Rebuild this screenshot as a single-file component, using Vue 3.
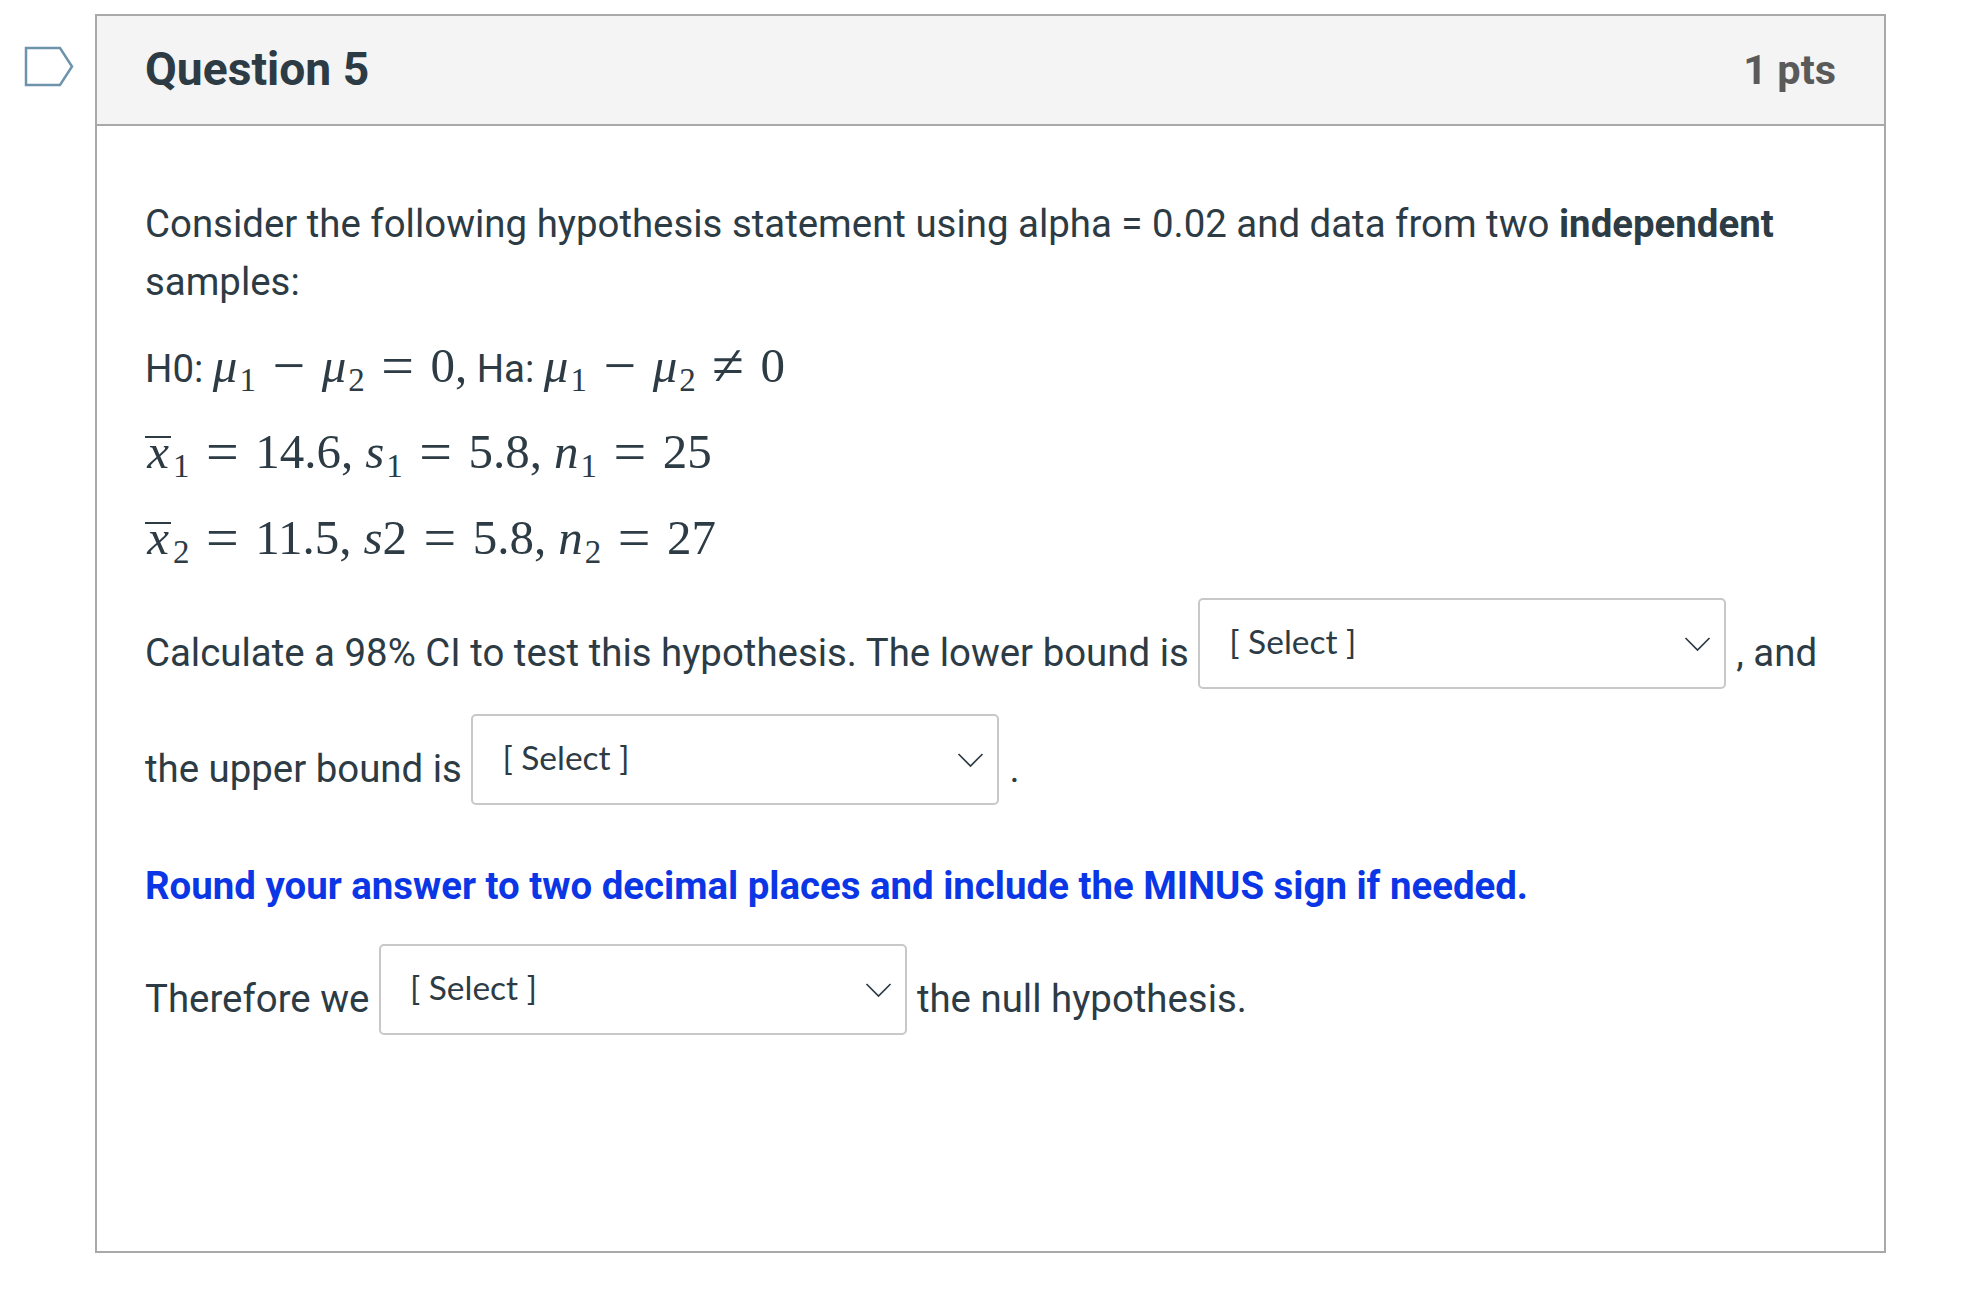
<script setup>
const selectLabel = '[ Select ]'
</script>

<template>
  <main class="page">
    <svg class="flag" width="50" height="44" viewBox="0 0 50 44" aria-hidden="true">
      <path d="M2 3H36L48 21.5L36 40H2Z" fill="#fff" stroke="#6e94ab" stroke-width="2.5" />
    </svg>
    <section class="card">
      <header class="head">
        <h2 class="title">Question 5</h2>
        <span class="pts">1 pts</span>
      </header>
      <div class="body">
        <p class="intro">Consider the following hypothesis statement using alpha = 0.02 and data from two <strong>independent</strong> samples:</p>
        <p class="hyp">
          H0: <span class="m"><i>μ</i><sub>1</sub><span class="op">−</span><i>μ</i><sub>2</sub><span class="op">=</span>0,</span>
          Ha: <span class="m"><i>μ</i><sub>1</sub><span class="op">−</span><i>μ</i><sub>2</sub><span class="op">≠</span>0</span>
        </p>
        <p class="m x1"><i class="bar">x</i><sub>1</sub><span class="op">=</span>14.6<span class="comma">,</span><i>s</i><sub>1</sub><span class="op">=</span>5.8<span class="comma">,</span><i>n</i><sub>1</sub><span class="op">=</span>25</p>
        <p class="m x2"><i class="bar">x</i><sub>2</sub><span class="op">=</span>11.5<span class="comma">,</span><i>s</i>2<span class="op">=</span>5.8<span class="comma">,</span><i>n</i><sub>2</sub><span class="op">=</span>27</p>
        <p class="blanks">
          <span>Calculate a 98% CI to test this hypothesis. The lower bound is</span>
          <span class="sel"><span class="sel-text">{{ selectLabel }}</span><svg width="27" height="16" viewBox="0 0 27 16"><path d="M1.5 2L13.5 14L25.5 2" fill="none" stroke="#2d3b45" stroke-width="1.7" /></svg></span>
          <span>, and </span>
          <span>the upper bound is</span>
          <span class="sel"><span class="sel-text">{{ selectLabel }}</span><svg width="27" height="16" viewBox="0 0 27 16"><path d="M1.5 2L13.5 14L25.5 2" fill="none" stroke="#2d3b45" stroke-width="1.7" /></svg></span>
          <span>.</span>
        </p>
        <p class="note">Round your answer to two decimal places and include the MINUS sign if needed.</p>
        <p class="blanks">
          <span>Therefore we</span>
          <span class="sel"><span class="sel-text">{{ selectLabel }}</span><svg width="27" height="16" viewBox="0 0 27 16"><path d="M1.5 2L13.5 14L25.5 2" fill="none" stroke="#2d3b45" stroke-width="1.7" /></svg></span>
          <span>the null hypothesis.</span>
        </p>
      </div>
    </section>
  </main>
</template>

<style>
html, body { margin: 0; background: #fff; }
</style>

<style scoped>
.page {
  position: relative;
  width: 1985px;
  height: 1296px;
  box-sizing: border-box;
  padding: 14px 0 0 95px;
  font-family: Roboto, "Liberation Sans", sans-serif;
  color: #2d3b45;
}
.flag { position: absolute; left: 24px; top: 45px; }
.card {
  width: 1791px;
  height: 1239px;
  box-sizing: border-box;
  border: 2px solid #a9a9a9;
}
.head {
  height: 110px;
  box-sizing: border-box;
  display: flex;
  justify-content: space-between;
  align-items: center;
  padding: 0 48px 2px;
  background: #f4f4f4;
  border-bottom: 2px solid #a9a9a9;
}
.title { margin: 0; font-size: 46.2px; font-weight: 700; }
.pts { font-size: 41.5px; font-weight: 700; color: #5a5a5a; }
.body { padding: 69px 48px 0; font-size: 38.4px; line-height: 58px; }
p { margin: 0 0 27px; }
.intro { margin-bottom: 26px; }
.hyp { margin-bottom: 25px; }
.x1 { margin-bottom: 28px; }
.x2 { margin-bottom: 31px; }
.m { font-family: "Liberation Serif", serif; font-size: 49px; }
.m i { font-style: italic; }
.m sub { font-size: 33px; line-height: 0; vertical-align: -9px; margin-left: 2px; }
.op { margin: 0 16.5px; font-size: 58px; line-height: 0; vertical-align: -3px; }
.comma { margin-right: 12px; }
.bar { position: relative; display: inline-block; width: 26px; text-align: center; line-height: 1; }
.bar::before {
  content: "";
  position: absolute;
  left: 0;
  right: 0;
  top: 9px;
  border-top: 2px solid #2d3b45;
}
.sel {
  display: inline-flex;
  justify-content: space-between;
  align-items: center;
  width: 528px;
  height: 91px;
  box-sizing: border-box;
  padding: 0 13px 0 29px;
  margin: 0 10px 25px 9.5px;
  vertical-align: 12.5px;
  border: 2px solid #c8c8c8;
  border-radius: 5px;
  background: #fff;
  font-family: Lato, "Open Sans", sans-serif;
  font-size: 33.5px;
  line-height: 1;
}
.sel-text { padding-bottom: 4px; }
.note { color: #0b36e6; font-weight: 700; margin-top: 12px; margin-bottom: 29px; }
</style>
